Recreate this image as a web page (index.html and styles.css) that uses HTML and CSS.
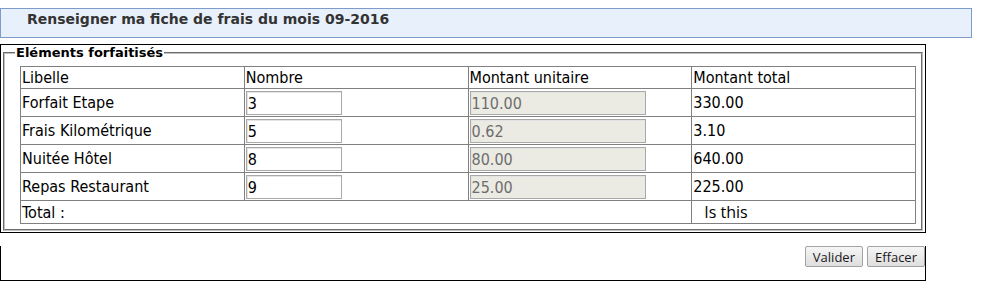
FILE: index.html
```html
<!DOCTYPE html>
<html lang="fr">
<head>
<meta charset="utf-8">
<title>Fiche de frais</title>
<link rel="stylesheet" href="styles.css">
</head>
<body>
<div class="page-title">
  <h2>Renseigner ma fiche de frais du mois 09-2016</h2>
</div>
<div class="forfait-box">
  <fieldset class="forfait">
    <legend>Eléments forfaitisés</legend>
    <table class="frais">
      <tr class="head">
        <td>Libelle</td>
        <td>Nombre</td>
        <td>Montant unitaire</td>
        <td>Montant total</td>
      </tr>
      <tr>
        <td>Forfait Etape</td>
        <td><input class="qte" type="text" value="3"></td>
        <td><input class="pu" type="text" value="110.00" disabled></td>
        <td>330.00</td>
      </tr>
      <tr>
        <td>Frais Kilométrique</td>
        <td><input class="qte" type="text" value="5"></td>
        <td><input class="pu" type="text" value="0.62" disabled></td>
        <td>3.10</td>
      </tr>
      <tr>
        <td>Nuitée Hôtel</td>
        <td><input class="qte" type="text" value="8"></td>
        <td><input class="pu" type="text" value="80.00" disabled></td>
        <td>640.00</td>
      </tr>
      <tr>
        <td>Repas Restaurant</td>
        <td><input class="qte" type="text" value="9"></td>
        <td><input class="pu" type="text" value="25.00" disabled></td>
        <td>225.00</td>
      </tr>
      <tr class="total">
        <td colspan="3">Total :</td>
        <td><span class="total-value">Is this</span></td>
      </tr>
    </table>
  </fieldset>
</div>
<div class="actions">
  <button class="btn" type="button">Valider</button>
  <button class="btn" type="button">Effacer</button>
</div>
</body>
</html>
```

FILE: styles.css
```css
html, body {
  margin: 0;
  padding: 0;
  background: #ffffff;
}
body {
  padding-top: 8px;
  font-family: "DejaVu Sans Condensed", "DejaVu Sans", sans-serif;
  color: #000;
}
.page-title {
  width: 972px;
  box-sizing: border-box;
  height: 30px;
  background: #e8f0fc;
  border: 1px solid #7d9ccc;
  padding: 0 0 0 26px;
}
.page-title h2 {
  margin: 0;
  font-family: "DejaVu Sans", sans-serif;
  font-weight: bold;
  font-size: 14px;
  line-height: 16px;
  padding-top: 2px;
  color: #333333;
}
.forfait-box {
  margin-top: 6px;
  width: 926px;
  box-sizing: border-box;
  border: 1px solid #000;
}
.forfait {
  margin: 0 2px 1px 2px;
  border: 2px groove #c0c0c0;
  padding: 5px 4px 5px 15px;
}
.forfait legend {
  margin-left: -5px;
  padding: 0 1px;
  font-family: "DejaVu Sans", sans-serif;
  font-weight: bold;
  font-size: 13px;
  line-height: 16px;
  color: #000;
}
.frais {
  width: 896px;
  border-collapse: collapse;
  table-layout: fixed;
  font-size: 16px;
}
.frais td {
  border: 1px solid #808080;
  padding: 2px 1px 1px 1px;
  height: 24px;
  line-height: 18px;
  vertical-align: middle;
  color: #000;
}
.frais tr.head td,
.frais tr.total td {
  height: 18px;
  padding-top: 2px;
  padding-bottom: 1px;
}
.frais input {
  box-sizing: border-box;
  height: 24px;
  margin: 0;
  padding: 0 1px;
  font-family: "DejaVu Sans Condensed", "DejaVu Sans", sans-serif;
  font-size: 16px;
  border: 1px solid #a9a9a9;
  box-shadow: inset 1px 1px 0 #e3e3e3;
  display: block;
}
.frais input.qte {
  width: 96px;
  background: #fff;
  color: #000;
}
.frais input.pu {
  width: 176px;
  background: #ebebe4;
  color: #6d6d6d;
}
.total-value {
  display: inline-block;
  padding-left: 11px;
  font-family: "Open Sans", sans-serif;
  font-size: 16px;
  line-height: 18px;
}
.actions {
  margin-top: 13px;
  width: 926px;
  box-sizing: border-box;
  height: 35px;
  border: 1px solid #000;
  border-top: none;
  display: flex;
  justify-content: flex-end;
  align-items: flex-start;
  gap: 4px;
}
.btn {
  height: 21px;
  margin: 0;
  padding: 0 7px;
  font-family: "Open Sans", sans-serif;
  font-size: 13px;
  line-height: 18px;
  color: #1a1a1a;
  background: linear-gradient(#f6f6f6, #dedede);
  border: 1px solid #a3a3a3;
  border-radius: 2px;
}
```
